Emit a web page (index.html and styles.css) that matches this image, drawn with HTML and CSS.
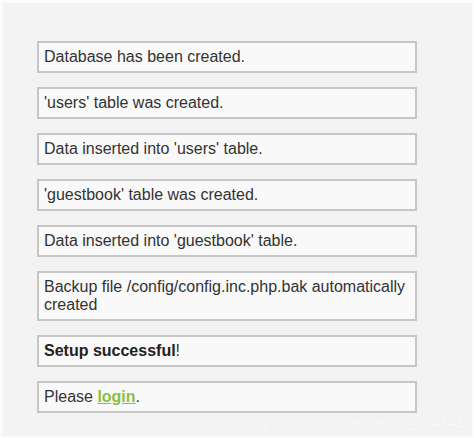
FILE: index.html
```html
<!DOCTYPE html>
<html lang="en">
<head>
    <meta charset="UTF-8">
    <title>Setup</title>
    <link rel="stylesheet" href="styles.css">
</head>
<body>
    <div class="page">
        <div class="messages">
            <div class="message">Database has been created.</div>
            <div class="message">'users' table was created.</div>
            <div class="message">Data inserted into 'users' table.</div>
            <div class="message">'guestbook' table was created.</div>
            <div class="message">Data inserted into 'guestbook' table.</div>
            <div class="message">Backup file /config/config.inc.php.bak automatically created</div>
            <div class="message"><b>Setup successful</b>!</div>
            <div class="message">Please <a href="#">login</a>.</div>
        </div>
        <div class="watermark">https://blog.csdn.net/weixin_46245411</div>
    </div>
</body>
</html>
```

FILE: styles.css
```css
* {
    margin: 0;
    padding: 0;
    box-sizing: border-box;
}

body {
    font-family: "Liberation Sans", Arial, sans-serif;
    font-size: 16px;
    color: #333333;
    background: #fbfbfb;
}

.page {
    position: relative;
    margin: 3px 2px 2px 3px;
    height: 433px;
    padding: 38px 0 0 34px;
    background: #f3f3f3;
}

.messages {
    display: flex;
    flex-direction: column;
    gap: 14px;
    width: 380px;
}

.message {
    padding: 5px 6px 5px 5px;
    line-height: 18px;
    background: #f9f9f9;
    border: 2px solid #c6c6c6;
}

.message b {
    font-weight: bold;
    color: #222222;
}

.message a {
    color: #8cbf3f;
    font-weight: bold;
    text-decoration: underline;
}

.watermark {
    position: absolute;
    right: 3px;
    bottom: 6px;
    font-size: 13px;
    color: #fafafa;
    text-shadow: 0 0 1px #e8e8e8;
}
```
